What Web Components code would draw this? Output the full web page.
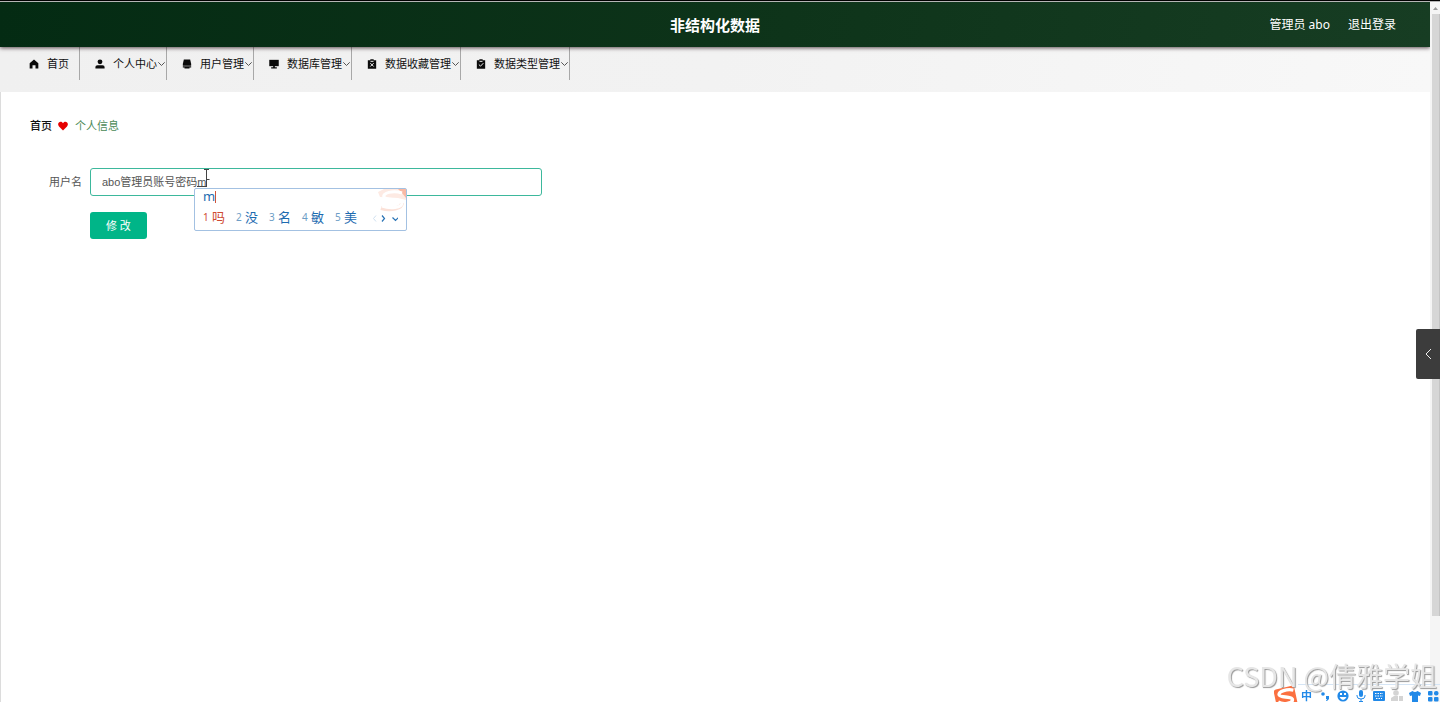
<!DOCTYPE html>
<html lang="zh-CN">
<head>
<meta charset="utf-8">
<title>非结构化数据</title>
<style>
html, body {
    margin: 0;
    height: 100%;
    overflow: hidden;
    background: #fff;
    font-family: "Noto Sans", "Noto Sans CJK SC", sans-serif;
}
</style>
</head>
<body>
<admin-app>
    <app-header slot="header" name="非结构化数据" user="管理员 abo"></app-header>
    <app-nav slot="nav">
        <nav-item icon="home" home>首页</nav-item>
        <nav-item icon="user">个人中心</nav-item>
        <nav-item icon="screen">用户管理</nav-item>
        <nav-item icon="monitor">数据库管理</nav-item>
        <nav-item icon="clipx">数据收藏管理</nav-item>
        <nav-item icon="clipcheck">数据类型管理</nav-item>
    </app-nav>
    <bread-crumb current="个人信息">首页</bread-crumb>
    <user-form></user-form>
</admin-app>
<drawer-tab></drawer-tab>
<ime-bar></ime-bar>
<water-mark>CSDN @倩雅学姐</water-mark>

<script>
function define(name, html, setup) {
    const template = document.createElement('template');
    template.innerHTML = html;
    customElements.define(name, class extends HTMLElement {
        constructor() {
            super();
            this.attachShadow({mode: 'open'});
            this.shadowRoot.appendChild(template.content.cloneNode(true));
        }
        connectedCallback() {
            if (setup) setup(this, this.shadowRoot);
        }
    });
}

const icons = {
    home: '<path d="M6 0.6 0.8 5v6.4h3.4V7.6h3.6v3.8h3.4V5z"/>',
    user: '<circle cx="6" cy="3.4" r="2.9"/><path d="M.5 11.400V9.6Q.5 7.400 3 7.400h6q2.500 0 2.500 2.200v1.800z"/>',
    screen: '<path d="M2.200.600h7.600l1.200 5.400v2H1V6z"/><path d="M1 8.800h10v1.400H9v1.200H3v-1.200H1z"/>',
    monitor: '<path d="M.3 1h11.400v7.600H.3z"/><path d="M5 8h2v2h2.4v1.400H2.6V10H5z"/>',
    clipx: '<path d="M1 1.600H4V.2h4v1.400h3v10.200H1z"/><path d="M4.200 2.800h3.6M4 5l4 4M8 5 4 9" stroke="#f1f1f1" fill="none" stroke-width="1.200"/>',
    clipcheck: '<path d="M1 1.600H4V.2h4v1.400h3v10.200H1z"/><path d="M4.200 2.800h3.6M3.400 6.600l2 2 3.400-3.600" stroke="#f1f1f1" fill="none" stroke-width="1.200"/>'
};

const sogou = '<path fill="#fb7040" d="M2 5 18 1q3-1 4 2l3 14q1 3-2 4L7 25q-3 1-4-2L0 9q-1-3 2-4z"/>' +
    '<path fill="none" stroke="#fff" stroke-width="3.6" d="M21 5.500C14 4 5 7 5.500 10.500S20 12 20 16 10 21.500 4.500 18.500"/>';

define('admin-app', `
<style>
:host { display: flex; flex-direction: column; height: 100vh; }
.top { flex: none; height: 1px; border-bottom: 1px solid #b5b5b5; background: #000; }
.row { display: flex; flex: 1; min-height: 0; }
.page { flex: 1; min-width: 0; display: flex; flex-direction: column; }
main { flex: 1; border-left: 1px solid #dcdcdc; padding: 26px 29px; display: flex; flex-direction: column; gap: 34px; }
</style>
<div class="top"></div>
<div class="row">
    <div class="page">
        <slot name="header"></slot>
        <slot name="nav"></slot>
        <main><slot></slot></main>
    </div>
    <scroll-rail></scroll-rail>
</div>`);

define('scroll-rail', `
<style>
:host { display: flex; flex-direction: column; width: 7px; padding: 0 1px 0 2px; background: #f5f5f5; }
svg { flex: none; width: 7px; height: 12px; }
.thumb { flex: 602; background: #d6d6d6; border-right: 1px solid #c4c4c4; margin-right: -1px; }
.rest { flex: 86; }
</style>
<svg viewBox="0 0 7 12"><path d="M1 8h5L3.500 5z" fill="#999"/></svg>
<div class="thumb"></div>
<div class="rest"></div>`);

define('app-header', `
<style>
:host {
    display: grid;
    grid-template-columns: 1fr auto 1fr;
    align-items: center;
    height: 45px;
    position: relative;
    background: linear-gradient(100deg, #042b13, #0d3319 50%, #173d23);
    box-shadow: 0 1px 4px rgba(40, 20, 25, .75);
    color: #fff;
    clip-path: inset(0 0 -8px 0);
}
h1 { grid-column: 2; margin: 0; font-size: 15px; line-height: 20px; }
.right { display: flex; justify-content: flex-end; gap: 18px; padding-right: 34px; font-size: 12px; line-height: 18px; }
a { color: inherit; text-decoration: none; }
</style>
<h1></h1>
<div class="right"><span></span><a href="#logout">退出登录</a></div>`, (el, root) => {
    root.querySelector('h1').textContent = el.getAttribute('name');
    root.querySelector('span').textContent = el.getAttribute('user');
});

define('app-nav', `
<style>
:host { display: block; }
nav { display: flex; height: 33px; padding-bottom: 12px; background: linear-gradient(100deg, #f0f0f0, #f2f2f2 50%, #f8f8f8); }
</style>
<nav><slot></slot></nav>`);

define('nav-item', `
<style>
:host { display: flex; border-right: 1px solid #a8a8a8; color: #111; }
a, button {
    display: flex;
    align-items: center;
    border: 0;
    margin: 0;
    padding: 0 1px 0 15px;
    background: none;
    color: inherit;
    font: inherit;
    font-size: 11px;
    line-height: 16px;
    text-decoration: none;
    white-space: nowrap;
}
a { padding: 0 10px 0 29px; }
.icon { width: 10px; height: 10px; margin-right: 8px; fill: #0b0b0b; }
.arrow { width: 7px; height: 6px; margin-left: 1px; fill: none; stroke: #555; }
</style>
<button type="button"><svg class="icon" viewBox="0 0 12 12"></svg><span><slot></slot></span><svg class="arrow" viewBox="0 0 7 6"><path d="M.3 1.300 3.500 4.500 6.700 1.300"/></svg></button>`, (el, root) => {
    root.querySelector('.icon').innerHTML = icons[el.getAttribute('icon')];
    if (el.hasAttribute('home')) {
        const link = document.createElement('a');
        link.href = '#home';
        root.querySelector('.arrow').remove();
        link.append(...root.querySelector('button').childNodes);
        root.querySelector('button').replaceWith(link);
    }
});

define('bread-crumb', `
<style>
:host { display: flex; align-items: center; font-size: 11px; line-height: 16px; }
a { color: #111; font-weight: 500; text-decoration: none; }
svg { width: 10px; height: 10px; margin: 0 7px 0 6px; fill: #e60000; }
span { color: #4b8a57; }
</style>
<a href="#home"><slot></slot></a>
<svg viewBox="0 0 10 10"><path d="M5 9.500 1 5.600C-1 3 .8.800 2.600.800 3.800.800 4.600 1.500 5 2.200 5.400 1.500 6.200.800 7.400.800 9.200.800 11 3 9 5.600z"/></svg>
<span></span>`, (el, root) => {
    root.querySelector('span').textContent = el.getAttribute('current');
});

define('user-form', `
<style>
:host { display: block; padding-left: 19px; }
form { display: grid; grid-template-columns: 33px minmax(0, 452px); column-gap: 8px; row-gap: 16px; align-items: center; }
label { font-size: 11px; line-height: 16px; color: #555; white-space: nowrap; }
.field { position: relative; }
input {
    display: block;
    box-sizing: border-box;
    width: 100%;
    height: 28px;
    padding: 0 11px 2px;
    border: 1px solid #3db89c;
    border-radius: 3px;
    outline: 0;
    background: #fff;
    color: #555;
    font: 11px "Liberation Sans", "Noto Sans CJK SC", sans-serif;
}
.cursor { position: absolute; left: 106px; top: 0; width: 20px; height: 20px; fill: none; stroke: #444; }
ime-popup { position: absolute; left: 104px; top: 20px; }
button {
    grid-column: 2;
    justify-self: start;
    height: 27px;
    padding: 0 16px;
    border: 0;
    border-radius: 3px;
    background: #00b588;
    color: #fff;
    font: inherit;
    font-size: 11px;
    line-height: 16px;
}
</style>
<form>
    <label for="name">用户名</label>
    <div class="field">
        <input id="name" type="text" value="abo管理员账号密码m">
        <svg class="cursor" viewBox="0 0 20 20"><path d="M8 1.500h5M10.500 1.500v11M10.500 11.500h3M10.500 8v11M1 18.500h9"/></svg>
        <ime-popup></ime-popup>
    </div>
    <button type="button">修 改</button>
</form>`);

define('ime-popup', `
<style>
:host {
    display: block;
    box-sizing: border-box;
    width: 213px;
    padding: 0 8px;
    border: 1px solid #a3c1e2;
    border-radius: 2px;
    background: #fff;
    color: #1d6bb0;
    font-size: 13px;
    line-height: 18px;
}
.typed { display: flex; height: 17px; }
.typed span { height: 15px; line-height: 15px; }
.typed i { width: 1px; height: 12px; margin-top: 2px; background: #d0543c; }
ol { display: flex; margin: 0; padding: 1px 0 3px; list-style: none; gap: 11px; line-height: 20px; }
li { display: flex; gap: 3px; }
small { width: 6px; font-size: 10px; color: #6d9dc6; }
.on, .on small { color: #cf4a32; }
.arrows { width: 30px; height: 20px; fill: none; stroke: #2873b5; }
.logo { position: absolute; right: 0; top: 0; width: 28px; height: 23px; }
</style>
<svg class="logo" viewBox="0 0 28 23"><path d="M0 3 6 0h22v11L20 9 2 8z" fill="#fdeae3"/><path d="M20 0h8v9l-4-5z" fill="#f9b9a4"/><path d="M24 14C24 19 13 22 3 19" fill="none" stroke="#fbe1d8" stroke-width="4"/><path d="M24 4C15 1 4 4 6 8s18 1 18 6-12 6-20 3" fill="none" stroke="#fff" stroke-width="3"/></svg>
<div class="typed"><span>m</span><i></i></div>
<ol>
    <li class="on"><small>1</small>吗</li>
    <li><small>2</small>没</li>
    <li><small>3</small>名</li>
    <li><small>4</small>敏</li>
    <li><small>5</small>美</li>
    <li><svg class="arrows" viewBox="0 0 30 20"><path d="M8 8.500 5.500 11.500 8 14.500" stroke="#cfe0f0"/><path d="M15 8.500l2.500 3-2.500 3M25.500 10.500l3 3 3-3" transform="translate(-1 0)" stroke-width="1.200"/></svg></li>
</ol>`);

define('drawer-tab', `
<style>
:host { position: fixed; right: 0; top: 329px; }
button { display: flex; align-items: center; justify-content: center; width: 24px; height: 50px; padding: 0; border: 0; border-radius: 2px 0 0 2px; background: #3c3c3c; }
svg { width: 8px; height: 12px; fill: none; stroke: #eee; }
</style>
<button type="button" aria-label="展开"><svg viewBox="0 0 8 12"><path d="M7 1 2 6l5 5"/></svg></button>`);

define('water-mark', `
<style>
:host {
    position: fixed;
    right: 3px;
    bottom: 13px;
    color: #e6e6e6;
    font: 27px/26px "Noto Sans CJK SC", sans-serif;
    text-shadow: 1px 1px 1px #999;
    white-space: nowrap;
    pointer-events: none;
}
</style>
<slot></slot>`);

// only the upper part of the input method bar is above the window's lower edge
define('ime-bar', `
<style>
:host { position: fixed; right: 0; bottom: 0; display: flex; align-items: flex-start; height: 18px; overflow: hidden; color: #2189e8; }
.logo { width: 24px; height: 26px; }
.tools { display: flex; align-items: center; gap: 6px; height: 13px; padding: 4px 1px 0 3px; border-top: 1px solid #d5e5f5; }
.tools svg { width: 12px; height: 12px; fill: #2189e8; stroke: none; }
b { width: 12px; font-size: 11px; line-height: 12px; }
</style>
<svg class="logo" viewBox="0 0 26 26">${sogou}</svg>
<div class="tools">
    <b>中</b>
    <svg viewBox="0 0 12 12"><circle cx="4" cy="4" r="1.800"/><path d="M7 6h3v3l-2 2H7l1-2H7z"/></svg>
    <svg viewBox="0 0 12 12"><circle cx="6" cy="6" r="5.600"/><path d="M2.500 7h7Q8 10 6 10T2.500 7zM3 3h2v2H3zM7 3h2v2H7z" fill="#fff"/></svg>
    <svg viewBox="0 0 12 12"><rect x="4" y="0" width="4" height="7" rx="2"/><path d="M2 5v1q0 3 4 3t4-3V5M6 9v3M4 11.500h4" fill="none" stroke="#2189e8"/></svg>
    <svg viewBox="0 0 12 12"><rect x="0" y="1" width="12" height="10" rx="1"/><path d="M2 3.500h8M2 6h8M3 8.500h6" stroke="#fff" stroke-dasharray="1.500 1"/></svg>
    <svg viewBox="0 0 12 12" style="fill:#d4d4d4"><circle cx="5" cy="3" r="2.800"/><path d="M0 11V8l3-2h4v5zM8 6h4v5H8z"/></svg>
    <svg viewBox="0 0 12 12"><path d="M3.500 1q2.500 2 5 0L12 3l-1 3-2-.5V12H3V5.500L1 6 0 3z"/></svg>
    <svg viewBox="0 0 12 12"><rect x="1" y="1" width="4.500" height="4.500" rx="1"/><rect x="7" y="1" width="4.500" height="4.500" rx="2"/><rect x="1" y="7" width="4.500" height="4.500" rx="1"/><rect x="7" y="7" width="4.500" height="4.500" rx="1"/></svg>
</div>`);
</script>
</body>
</html>
